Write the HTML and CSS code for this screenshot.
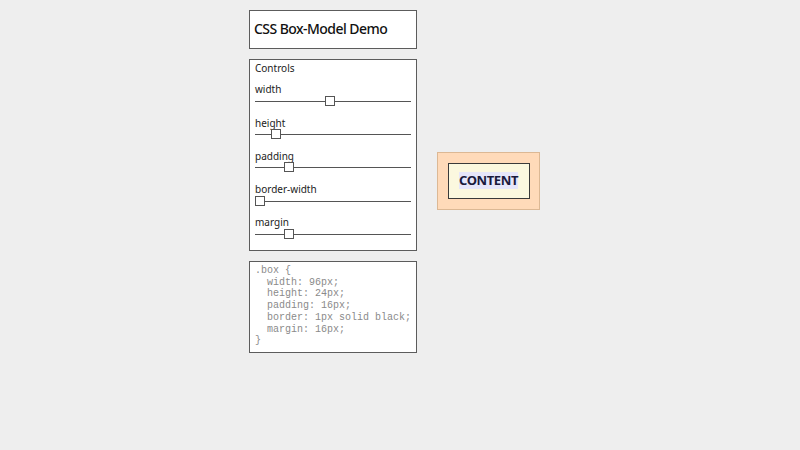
FILE: index.html
```html
<!DOCTYPE html>
<html lang="en">
<head>
  <meta charset="UTF-8" />
  <meta name="viewport" content="width=device-width, initial-scale=1.0"/>
  <title>CSS Box-Model Demo</title>
  <link rel="stylesheet" href="styles.css">
</head>
<body>
  <div class="page">
    <div class="sidebar">
      <div class="card title-card">
        <h1>CSS Box-Model Demo</h1>
      </div>

      <div class="card controls">
        <div class="legend">Controls</div>
        <label class="field">
          <span>width</span>
          <input type="range" min="0" max="200" value="96">
        </label>
        <label class="field">
          <span>height</span>
          <input type="range" min="8" max="150" value="24">
        </label>
        <label class="field">
          <span>padding</span>
          <input type="range" min="0" max="80" value="16">
        </label>
        <label class="field">
          <span>border-width</span>
          <input type="range" min="1" max="10" value="1">
        </label>
        <label class="field">
          <span>margin</span>
          <input type="range" min="0" max="80" value="16">
        </label>
      </div>

      <pre class="card code">.box {
  width: 96px;
  height: 24px;
  padding: 16px;
  border: 1px solid black;
  margin: 16px;
}</pre>
    </div>

    <div class="stage">
      <div class="margin-area">
        <div class="box">
          <span class="content">CONTENT</span>
        </div>
      </div>
    </div>
  </div>
</body>
</html>
```

FILE: styles.css
```css
body {
  margin: 0;
  background: #eeeeee;
  font-family: 'Noto Sans', 'Open Sans', sans-serif;
  color: #222;
}
.page {
  display: flex;
  justify-content: center;
  align-items: center;
  gap: 20px;
  padding-top: 10px;
}
.sidebar {
  width: 168px;
  display: flex;
  flex-direction: column;
  gap: 10px;
}
.card {
  background: #fff;
  border: 1px solid #5c5c5c;
  box-sizing: border-box;
}
.title-card {
  height: 39px;
  padding: 0 4px;
  display: flex;
  align-items: center;
}
h1 {
  margin: 0 0 3px;
  font-size: 14px;
  font-weight: 500;
  letter-spacing: -0.55px;
  white-space: nowrap;
  color: #111;
}
.controls {
  height: 192px;
  padding: 2px 5px 0;
  display: flex;
  flex-direction: column;
  gap: 11.25px;
  font-size: 10px;
}
.legend {
  line-height: 12px;
  margin-bottom: -1px;
}
.field {
  display: flex;
  flex-direction: column;
  gap: 1px;
  line-height: 12px;
}
.field span {
  margin-top: -1px;
}
.field input {
  -webkit-appearance: none;
  appearance: none;
  margin: 0;
  width: 156px;
  height: 10px;
  background: transparent;
}
.field input::-webkit-slider-runnable-track {
  height: 1px;
  background: #555;
}
.field input::-webkit-slider-thumb {
  -webkit-appearance: none;
  width: 10px;
  height: 10px;
  margin-top: -5px;
  box-sizing: border-box;
  background: #fff;
  border: 1px solid #555;
}
.code {
  margin: 0;
  height: 92px;
  padding: 3px 5px;
  font-family: 'Liberation Mono', monospace;
  font-size: 10px;
  line-height: 11.7px;
  color: #8a8a8a;
}
.stage {
  width: 114px;
  margin-bottom: 1px;
}
.margin-area {
  width: 103px;
  height: 58px;
  box-sizing: border-box;
  background: #ffdab9;
  border: 1px solid #dcb894;
  padding: 10px;
}
.box {
  width: 82px;
  height: 36px;
  box-sizing: border-box;
  background: #fbf8df;
  border: 1px solid #3a3a3a;
  padding: 8px 10px;
}
.content {
  display: block;
  width: 59px;
  height: 17px;
  background: #e6e6fa;
  font-size: 13px;
  font-weight: 700;
  line-height: 17px;
  letter-spacing: -0.4px;
  color: #1a1a3c;
  white-space: nowrap;
}
```
